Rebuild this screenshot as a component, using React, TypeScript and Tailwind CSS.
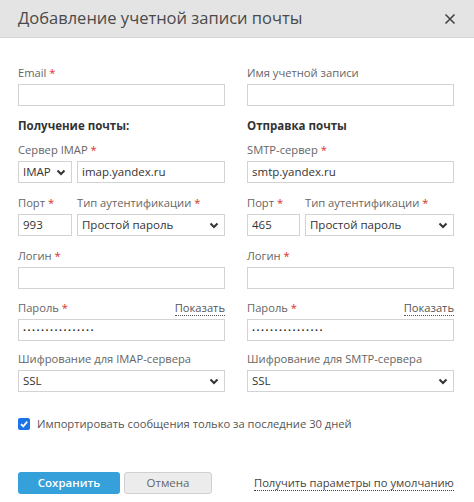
import React from "react";

const Chevron = () => (
  <svg width="10" height="7" viewBox="0 0 10 7" className="shrink-0">
    <polyline points="1.5,1.5 5,5 8.5,1.5" fill="none" stroke="#333" strokeWidth="2" />
  </svg>
);

const Req = () => <span className="text-[#d9302c]"> *</span>;

const Label = ({ children, req, right }: { children: React.ReactNode; req?: boolean; right?: React.ReactNode }) => (
  <div className="flex h-4 items-center justify-between leading-4 text-[#666] text-[11.2px] mb-[3px]">
    <span className="whitespace-nowrap">
      {children}
      {req && <Req />}
    </span>
    {right}
  </div>
);

const Input = ({ value, className = "" }: { value?: string; className?: string }) => (
  <div className={`h-[22px] border border-[#d3d3d3] bg-white px-[4px] flex items-center text-[11.5px] text-[#333] ${className}`}>
    {value}
  </div>
);

const Select = ({ value, className = "" }: { value: string; className?: string }) => (
  <div className={`h-[22px] border border-[#d3d3d3] bg-white pl-[4px] pr-[5px] flex items-center justify-between text-[11.5px] text-[#333] ${className}`}>
    <span className="whitespace-nowrap">{value}</span>
    <Chevron />
  </div>
);

const Dots = () => (
  <div className="h-[22px] border border-[#d3d3d3] bg-white px-[4px] flex items-center">
    <span className="text-[#333] text-[8px] tracking-[1.5px]">••••••••••••••••</span>
  </div>
);

const Show = () => (
  <span className="text-[#555] border-b border-dotted border-[#555] leading-[14px]">Показать</span>
);

const Column = ({
  heading,
  serverLabel,
  server,
  proto,
  port,
  enc,
  portW,
}: {
  heading: string;
  serverLabel: string;
  server: string;
  proto?: string;
  port: string;
  enc: string;
  portW: string;
}) => (
  <div className="flex flex-col">
    <div className="mt-3 mb-2 h-4 leading-4 text-[11.5px] font-bold text-[#333]">{heading}</div>
    <Label req>{serverLabel}</Label>
    <div className="flex gap-[5px]">
      {proto && <Select value={proto} className="w-[54px]" />}
      <Input value={server} className="flex-1" />
    </div>
    <div className="mt-3 flex gap-[5px]">
      <div className={portW}>
        <Label req>Порт</Label>
        <Input value={port} />
      </div>
      <div className="flex-1">
        <Label req>Тип аутентификации</Label>
        <Select value="Простой пароль" />
      </div>
    </div>
    <div className="mt-3">
      <Label req>Логин</Label>
      <Input />
    </div>
    <div className="mt-[11px]">
      <Label req right={<Show />}>Пароль</Label>
      <Dots />
    </div>
    <div className="mt-[10px]">
      <Label>{enc}</Label>
      <Select value="SSL" />
    </div>
  </div>
);

export default function App() {
  return (
    <div className="w-[474px] h-[502px] bg-white overflow-hidden" style={{ fontFamily: '"Open Sans", "Noto Sans", sans-serif' }}>
      <div className="h-[38px] bg-[#e4e4e4] border-b border-[#d6d6d6] flex items-center justify-between pl-[18px] pr-[18px]">
        <span className="text-[16.5px] text-[#4a4a4a] whitespace-nowrap">Добавление учетной записи почты</span>
        <svg width="12" height="12" viewBox="0 0 12 12">
          <path d="M1.5 1.5 L10.5 10.5 M10.5 1.5 L1.5 10.5" stroke="#444" strokeWidth="1.6" />
        </svg>
      </div>
      <div className="px-[18px] pt-[27px]">
        <div className="grid grid-cols-2 gap-x-[22px] w-[436px]">
          <div>
            <Label req>Email</Label>
            <Input className="border-[#80b4ca]" />
          </div>
          <div>
            <Label>Имя учетной записи</Label>
            <Input />
          </div>
          <Column heading="Получение почты:" serverLabel="Сервер IMAP" server="imap.yandex.ru" proto="IMAP" port="993" enc="Шифрование для IMAP-сервера" portW="w-[54px]" />
          <Column heading="Отправка почты" serverLabel="SMTP-сервер" server="smtp.yandex.ru" port="465" enc="Шифрование для SMTP-сервера" portW="w-[53px]" />
        </div>
        <div className="mt-[24px] h-4 flex items-center gap-[7px] text-[11.2px] text-[#555]">
          <span className="w-[12px] h-[12px] rounded-[2px] bg-[#1a73e8] flex items-center justify-center">
            <svg width="10" height="10" viewBox="0 0 10 10">
              <polyline points="2,5.2 4.2,7.4 8.2,2.6" fill="none" stroke="white" strokeWidth="1.8" />
            </svg>
          </span>
          <span className="whitespace-nowrap">Импортировать сообщения только за последние 30 дней</span>
        </div>
        <div className="mt-[40px] flex items-center">
          <button className="shrink-0 w-[102px] h-[22px] rounded-[3px] bg-[#35a0d9] text-white text-[11.5px] font-semibold">Сохранить</button>
          <button className="shrink-0 ml-[4px] w-[88px] h-[22px] rounded-[3px] bg-[#ececec] border border-[#d0d0d0] text-[#666] text-[11.5px]">Отмена</button>
          <span className="shrink-0 ml-[42px] text-[11.2px] text-[#444] border-b border-dotted border-[#444] leading-[14px] whitespace-nowrap">Получить параметры по умолчанию</span>
        </div>
      </div>
    </div>
  );
}
